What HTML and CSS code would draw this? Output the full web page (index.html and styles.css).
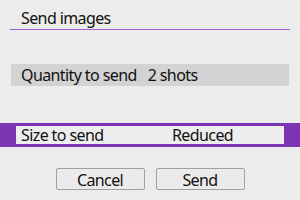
FILE: index.html
```html
<!DOCTYPE html>
<html lang="en">
<head>
    <meta charset="UTF-8">
    <title>Send images</title>
    <link rel="stylesheet" href="styles.css">
</head>
<body>
    <div class="screen">
        <div class="title">Send images</div>
        <div class="row quantity">
            <span class="label">Quantity to send</span>
            <span class="value">2 shots</span>
        </div>
        <div class="selected">
            <div class="row size">
                <span class="label">Size to send</span>
                <span class="value">Reduced</span>
            </div>
        </div>
        <div class="buttons">
            <button>Cancel</button>
            <button>Send</button>
        </div>
    </div>
</body>
</html>
```

FILE: styles.css
```css
* {
    margin: 0;
    padding: 0;
    box-sizing: border-box;
}

body {
    background: #ececec;
    font-family: 'Noto Sans', 'Open Sans', sans-serif;
    font-size: 16px;
    letter-spacing: -0.6px;
    color: #111;
}

.screen {
    width: 300px;
    height: 200px;
    display: flex;
    flex-direction: column;
}

.title {
    margin: 0 10px;
    height: 30px;
    padding: 8px 0 0 11px;
    line-height: 20px;
    border-bottom: 1px solid #9b5fd0;
}

.row {
    display: flex;
    align-items: center;
    padding-left: 10px;
}

.quantity {
    margin: 34px 11px 0;
    height: 22px;
    background: #d3d3d3;
}

.quantity .value {
    margin-left: 11px;
}

.selected {
    margin-top: 37px;
    background: #7b35b3;
    padding: 3px 16px;
}

.size {
    height: 18px;
    background: #ededed;
    padding-left: 5px;
}

.size .label {
    width: 151px;
}

.buttons {
    display: flex;
    justify-content: center;
    gap: 11px;
    margin-top: 21px;
}

button {
    width: 89px;
    height: 22px;
    background: #ebebeb;
    border: 1px solid #a0a0a0;
    border-radius: 2px;
    font-family: inherit;
    font-size: 16px;
    letter-spacing: -0.6px;
    color: #111;
}
```
